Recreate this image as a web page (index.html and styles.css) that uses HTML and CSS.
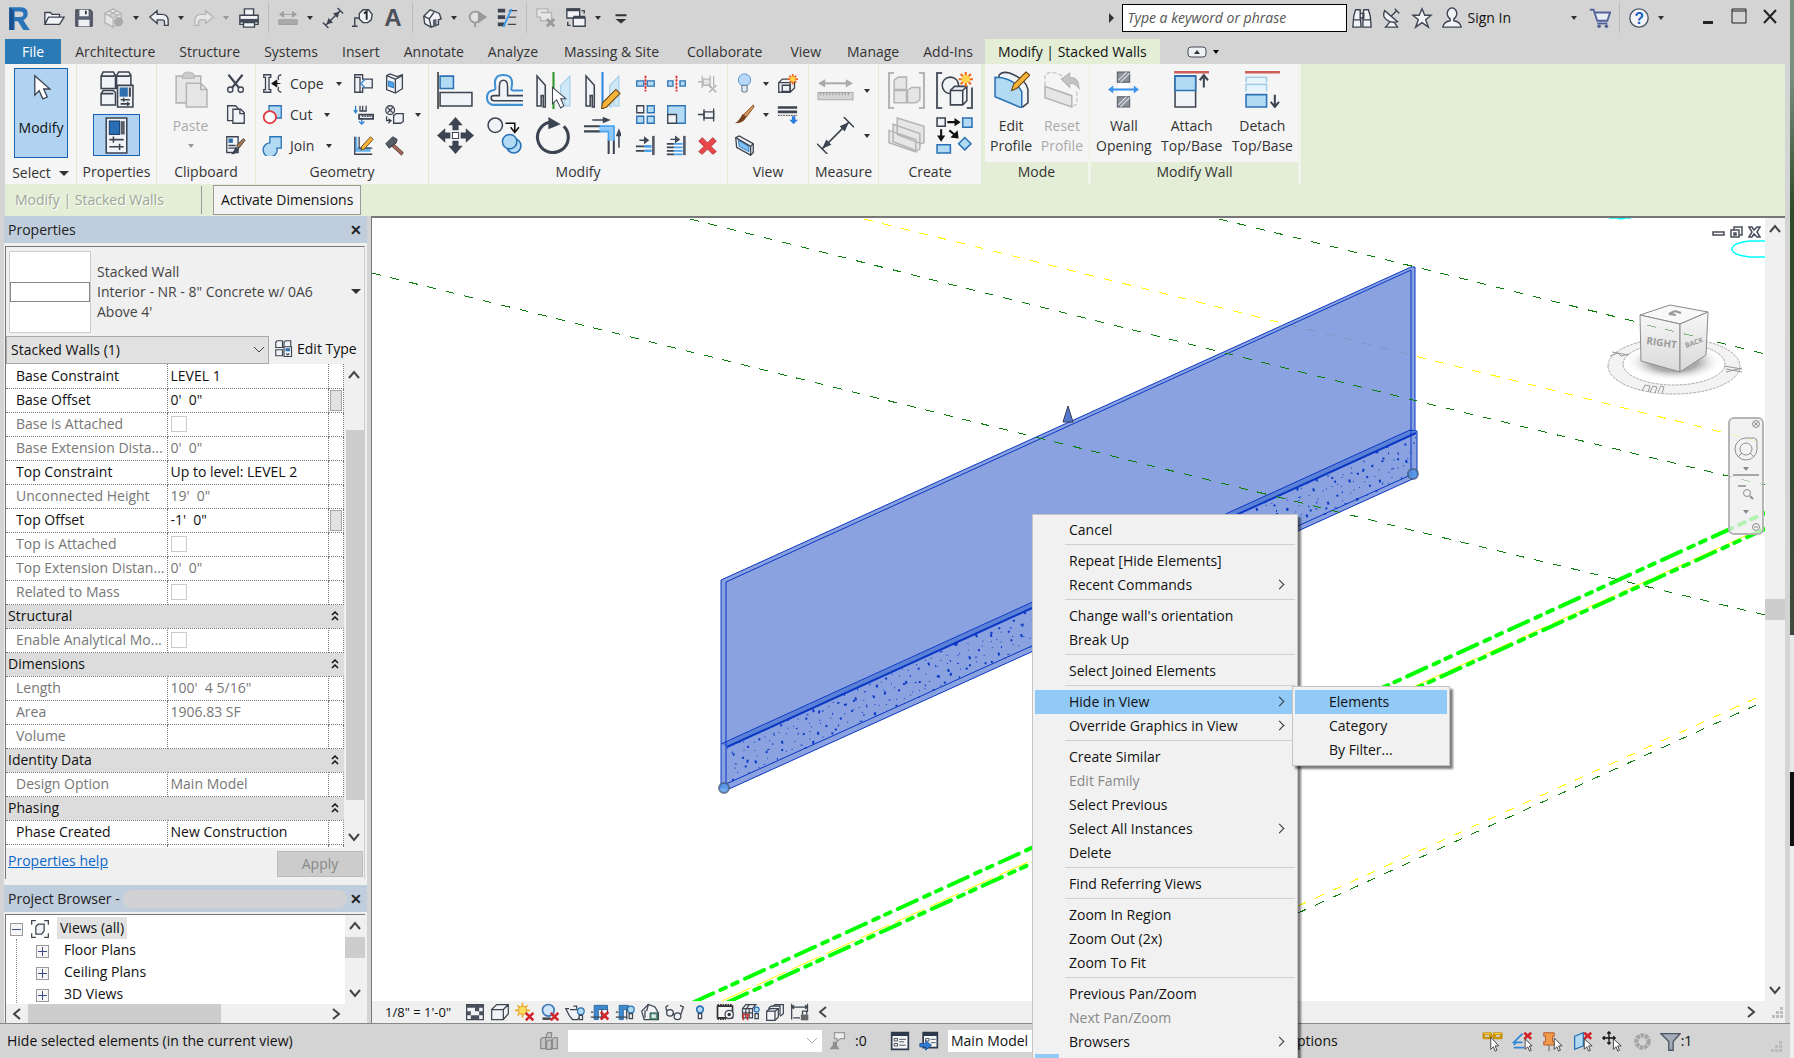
FILE: index.html
```
<!DOCTYPE html>
<html lang="en">
<head>
  <meta charset="UTF-8" />
  <meta name="viewport" content="width=device-width, initial-scale=1.0"/>
  <title>Stacked Wall - 3D View</title>
<link rel="stylesheet" href="styles.css">
</head>
<body>
<div class="app">

<!-- quick access toolbar -->
<header class="titlebar">
  <button class="qb logo" aria-label="Application menu"><svg viewBox="0 0 24 24"><path d="M3 2h11q6 0 6 6 0 4-4 6l6 9h-6l-5-8H8v8H3z" fill="#2b74b8"/><path d="M8 6h5q3 0 3 2.500T13 11H8z" fill="#d4d4d4"/><path d="M3 2l4 3v18H3z" fill="#1a4f8c"/></svg></button>
  <button class="qb" aria-label="Open"><svg viewBox="0 0 24 24"><path class="w" d="M2 19V6h6l2 2h8v3M2 19l4-8h17l-5 8z"/></svg></button>
  <button class="qb" aria-label="Save"><svg viewBox="0 0 24 24"><path d="M3 3h16l2 2v16H3z" fill="#596070" stroke="#343a45"/><path d="M7 3h10v7H7zM6 14h12v7H6z" fill="#eef0f4"/><path d="M13 4h2v4h-2z" fill="#343a45"/></svg></button>
  <button class="qb" aria-label="Synchronize"><svg viewBox="0 0 24 24"><path class="g" d="M2 7l9-5 9 5v9l-9 6-9-5zM2 7l9 5 9-5M11 12v10M6 4l9 5M16 4L7 9"/><circle cx="17" cy="16" r="5" fill="#aaa"/></svg></button><i class="caret wide"></i>
  <button class="qb" aria-label="Undo"><svg viewBox="0 0 24 24"><path class="w" d="M2 11l8-7v4h5q7 0 7 7v5h-4v-4q0-2-3-2h-5v4z"/></svg></button><i class="caret wide"></i>
  <button class="qb" aria-label="Redo"><svg viewBox="0 0 24 24"><path class="g" d="M22 11l-8-7v4H9q-7 0-7 7v5h4v-4q0-2 3-2h5v4z"/></svg></button><i class="caret wide dim"></i>
  <button class="qb" aria-label="Print"><svg viewBox="0 0 24 24"><path class="w" d="M7 9V2h10v7M2 9h20v10H2z"/><path d="M2 13h20v4H2z" fill="#444b58"/><path class="w" d="M6 17h12v5H6z"/></svg></button>
  <span class="vsep"></span>
  <button class="qb" aria-label="Measure"><svg viewBox="0 0 24 24"><path d="M3 8h18M3 8l4-3v6zM21 8l-4-3v6zM2 14h20v5H2z" fill="#aaa" stroke="#999"/></svg></button><i class="caret wide"></i>
  <button class="qb" aria-label="Aligned dimension"><svg viewBox="0 0 24 24"><path class="d" d="M4 20L20 4M1 17l6 6M17 1l6 6"/><path d="M5 19l2-7 5 5zM19 5l-2 7-5-5z" fill="#3d4451"/></svg></button>
  <button class="qb" aria-label="Tag"><svg viewBox="0 0 24 24"><path class="d" d="M3 21V12h6M0 21h6"/><path class="w" d="M12 3h6l4 5-1 6-4 3h-5l-4-4V7z"/><path d="M13 7l3-2v9" stroke="#222" stroke-width="2" fill="none"/></svg></button>
  <button class="qb letter" aria-label="Text">A</button>
  <span class="vsep"></span>
  <button class="qb" aria-label="Default 3D view"><svg viewBox="0 0 24 24"><path class="w" d="M3 10l7-7 10 4 2 6-3 1v5l-8 3-7-4z"/><path class="d" d="M3 10l6 3 5-7M9 13l2 9"/><path d="M13 14l4-1v7l-4 1z" fill="#596070"/></svg></button><i class="caret wide"></i>
  <button class="qb" aria-label="Section"><svg viewBox="0 0 24 24"><circle cx="10" cy="11" r="6" fill="#e2e2e2" stroke="#999" stroke-width="2"/><path d="M13 4l10 7-10 7z" fill="#999"/><path d="M10 17v5" stroke="#999" stroke-width="2"/></svg></button>
  <button class="qb" aria-label="Thin lines"><svg viewBox="0 0 24 24"><path d="M2 4h8M2 11h8M2 19h8" stroke="#3d4451" stroke-width="4"/><path d="M14 4h9M13 11h9M13 19h9" stroke="#3d4451" stroke-width="1.500"/><path d="M17 2L8 22" stroke="#3b9cf0" stroke-width="2"/></svg></button>
  <span class="vsep"></span>
  <button class="qb" aria-label="Close hidden windows"><svg viewBox="0 0 24 24"><path class="g" d="M2 2h12v4h4v9H6v-4H2zM6 6h12"/><path d="M13 13l8 8M21 13l-8 8" stroke="#999" stroke-width="3"/></svg></button>
  <button class="qb" aria-label="Switch windows"><svg viewBox="0 0 24 24"><path class="w" d="M2 2h14v10H2z"/><path d="M2 3h14M9 11h13" stroke="#3d4451" stroke-width="3"/><path class="w" d="M9 12h13v9H9z"/><path class="d" d="M18 4h3v3M3 16v4h3"/></svg></button><i class="caret wide"></i>
  <button class="qb" aria-label="Customize"><svg viewBox="0 0 24 24"><path d="M6 8h12v2H6zM6 13h12l-6 5z" fill="#333"/></svg></button>

  <div class="title-right">
    <i class="caret side"></i>
    <input class="search" type="text" placeholder="Type a keyword or phrase" aria-label="Search help">
    <button class="qb" aria-label="Search"><svg viewBox="0 0 24 24"><path class="w" d="M5 3h5v6l1 13H2l1-12zM14 3h5l2 7 1 12h-9V9zM10 7h4v5h-4zM3 14h8M13 14h9"/></svg></button>
    <button class="qb" aria-label="Communication center"><svg viewBox="0 0 24 24"><path class="w" d="M4 4q-3 6 2 10 5 4 12 2zM10 16l-5 6h13l-4-6"/><path class="d" d="M11 10l6-6M15 2l5 5"/></svg></button>
    <button class="qb" aria-label="Favorites"><svg viewBox="0 0 24 24"><path class="w" d="M12 2l3 7h7l-6 5 3 8-7-5-7 5 3-8-6-5h7z"/></svg></button>
    <button class="qb" aria-label="Account"><svg viewBox="0 0 24 24"><path class="w" d="M2 22q1-6 8-7v-2q-4-3-3-8 2-4 5-4t5 4q1 5-3 8v2q7 1 8 7z"/></svg></button>
    <a class="signin" href="#">Sign In</a>
    <i class="caret"></i>
    <button class="qb" aria-label="App store"><svg viewBox="0 0 24 24"><path d="M1 3h4l4 12h11l3-9H6" fill="#e8ebf3" stroke="#51629a" stroke-width="2"/><path d="M9 18h11" stroke="#51629a" stroke-width="2"/><circle cx="11" cy="21" r="2" fill="#51629a"/><circle cx="19" cy="21" r="2" fill="#51629a"/></svg></button>
    <span class="vsep"></span>
    <button class="qb" aria-label="Help"><svg viewBox="0 0 24 24"><circle cx="12" cy="12" r="10" fill="#f2f4f8" stroke="#4c5568" stroke-width="1.500"/><text x="7" y="18" font-family="Liberation Sans" font-weight="bold" font-size="17" fill="#1e5fc0">?</text></svg></button><i class="caret wide"></i>
    <div class="win">
      <button aria-label="Minimize"><svg viewBox="0 0 24 24"><path d="M7 15h10v3H7z" fill="#222"/></svg></button>
      <button aria-label="Maximize"><svg viewBox="0 0 24 24"><path d="M5 3h14v14H5zM5 5h14" fill="none" stroke="#222"/></svg></button>
      <button aria-label="Close"><svg viewBox="0 0 24 24"><path d="M6 4l12 13M18 4L6 17" stroke="#222" stroke-width="2"/></svg></button>
    </div>
  </div>
</header>

<nav class="tabs">
  <a class="file" href="#">File</a>
  <a href="#">Architecture</a>
  <a href="#">Structure</a>
  <a href="#">Systems</a>
  <a href="#">Insert</a>
  <a href="#">Annotate</a>
  <a href="#">Analyze</a>
  <a class="roomy" href="#">Massing &amp; Site</a>
  <a class="roomy" href="#">Collaborate</a>
  <a class="roomy" href="#">View</a>
  <a href="#">Manage</a>
  <a href="#">Add-Ins</a>
  <a class="current" href="#">Modify | Stacked Walls</a>
  <button class="mini" aria-label="Minimize ribbon"><svg viewBox="0 0 20 12"><rect x="1" y="1" width="18" height="10" rx="3" fill="#eef0f4" stroke="#444b58"/><path d="M7 8h6l-3-4z" fill="#333"/></svg><i class="caret"></i></button>
</nav>

<!-- ribbon -->
<section class="ribbon">
  <div class="panel p-select">
    <div class="body">
      <button class="modify-btn"><svg class="ic" viewBox="0 0 36 36"><path d="M11 3v22l5-5 4 9 5-2-4-9h7z" fill="#fff" stroke="#3d4451" stroke-width="1.500"/></svg>Modify</button>
    </div>
    <h2>Select <i class="caret big"></i></h2>
  </div>
  <div class="panel p-props">
    <div class="body stack">
      <button class="tool" aria-label="Type properties"><svg class="ic" viewBox="0 0 36 36"><path class="w" d="M5 1h10l2 3v13H3V5zM20 1h10l2 3v13H18V5zM5 19h10l2 2v12H3V22zM3 5h12l2-2M18 5h12l2-2M3 22h12"/><path class="w" d="M19 14h15v21H19z"/><path d="M21 16h8v9h-8z" fill="#2f6fae"/><path d="M30 16h2v9h-2z" fill="#3d4451"/><path class="d" d="M22 28h9M22 32h9M25 26v4M29 30v4"/></svg></button>
      <button class="tool on" aria-label="Properties"><svg class="ic" viewBox="0 0 36 36"><path class="w" d="M8 1h20v34H8z"/><path d="M11 4h10v13H11z" fill="#2a6fb5" stroke="#173e6c"/><path d="M22 4h4v13h-4z" fill="#59606d"/><path class="d" d="M11 22h14M15 19v6M11 29h14M21 26v6"/></svg></button>
    </div>
    <h2>Properties</h2>
  </div>
  <div class="panel p-clip">
    <div class="body">
      <button class="large dis"><svg class="ic" viewBox="0 0 36 36"><path class="g" d="M4 5h24v26H4z"/><path d="M10 7q0-6 6-6t6 6z" fill="#ccc" stroke="#b5b5b5"/><path class="g" d="M14 12h14l6 6v17H14zM28 12v6h6"/></svg>Paste<i class="caret dim"></i></button>
      <div class="col3">
        <button class="sm" aria-label="Cut"><svg viewBox="0 0 24 24"><path d="M4 2l12 15M20 2L8 17" stroke="#3d4451" stroke-width="2.500"/><circle cx="6" cy="19" r="3" class="w"/><circle cx="18" cy="19" r="3" class="w"/></svg></button>
        <button class="sm" aria-label="Copy"><svg viewBox="0 0 24 24"><path class="w" d="M3 2h9l3 3v14H3z"/><path class="w" d="M9 6h9l4 4v12H9z"/><path class="d" d="M17 6v5h5"/></svg></button>
        <button class="sm" aria-label="Match type"><svg viewBox="0 0 24 24"><path class="w" d="M2 2h13v18H2z"/><path d="M4 4h5v5H4z" fill="#2f6fae"/><path class="d" d="M4 12h8M4 15h7"/><path d="M21 4l2 2-7 9-3-3z" fill="#a6784f" stroke="#444"/><path d="M12 13l4 3q-2 6-9 6 3-3 5-9z" fill="#3d4451"/></svg></button>
      </div>
    </div>
    <h2>Clipboard</h2>
  </div>
  <div class="panel p-geom">
    <div class="body">
      <div class="col3">
        <button class="txt"><svg viewBox="0 0 24 24"><path class="w" d="M2 2h8v3H8v14h2v3H2v-3h2V5H2z"/><path d="M12 12h9M11 12l6-4v8z" fill="#111" stroke="#111"/><path class="d" d="M22 2q-5 1-3 6M22 22q-5-1-3-6"/></svg>Cope<i class="caret"></i></button>
        <button class="txt"><svg viewBox="0 0 24 24"><path class="b" d="M8 2h14v14H8z"/><circle cx="9" cy="15" r="7" fill="#fff" stroke="#e0383e" stroke-width="2"/></svg>Cut<i class="caret"></i></button>
        <button class="txt"><svg viewBox="0 0 24 24"><path class="b" d="M9 2h13v13h-5a8 8 0 11-8-6z"/></svg>Join<i class="caret"></i></button>
      </div>
      <div class="grid g2">
        <button class="sm" aria-label="Wall joins"><svg viewBox="0 0 24 24"><path class="w" d="M2 2h9v5h11v10H11v5H2zM2 5h6v17"/><path d="M14 7l-5 5 5 5" fill="none" stroke="#2f86d4" stroke-width="1.500"/></svg></button>
        <button class="sm" aria-label="Split face"><svg viewBox="0 0 24 24"><path class="w" d="M3 3l4-2 8 3 6-2v16l-8 5-10-4z"/><path class="d" d="M3 3l10 4v15M13 7l8-4"/><path d="M5 9l6 2v6l-6-2z" fill="#4aa3ee" stroke="#2a72b5"/></svg></button><span></span>
        <button class="sm" aria-label="Beam joins"><svg viewBox="0 0 24 24"><path d="M3 2v8M1 7l2 3 2-3M10 17v6M7 20l3 3 3-3" stroke="#2f86d4" fill="none" stroke-width="1.500"/><path class="d" d="M8 2v6h7V2M11 2v6"/><path d="M7 12h16v5H7z" fill="#f2f3f6" stroke="#3d4451" stroke-width="2"/><path class="d" d="M10 14h11" stroke-dasharray="2 1"/></svg></button>
        <button class="sm" aria-label="Paint"><svg viewBox="0 0 24 24"><circle class="w" cx="7" cy="7" r="5"/><path class="d" d="M4 4l6 6M10 4l-6 6M3 14v5h4M5 17l3 2-3 3"/><path class="w" d="M11 13l3-2h8v9l-3 2h-8z"/></svg></button><i class="caret"></i>
        <button class="sm" aria-label="Edit joins"><svg viewBox="0 0 24 24"><path d="M5 2v12h15v5H2V2z" fill="#65b2ef"/><path d="M2 2v20h20M7 2v13h15" stroke="#3d4451" fill="none" stroke-width="1.500"/><path class="pencil" d="M20 2l3 3-10 11-4 1 1-4z"/></svg></button>
        <button class="sm" aria-label="Demolish"><svg viewBox="0 0 24 24"><path d="M10 9l12 11-2 3L8 12z" fill="#a4675a" stroke="#59372f"/><path d="M2 10l8-8 5 3-1 4-8 6z" fill="#555c68" stroke="#2d323b"/></svg></button><span></span>
      </div>
    </div>
    <h2>Geometry</h2>
  </div>
  <div class="panel p-modify">
    <div class="body">
      <div class="grid g4">
        <button class="tool" aria-label="Align"><svg class="ic" viewBox="0 0 36 36"><path d="M1 0v36" stroke="#333" stroke-width="1.500"/><path class="b" d="M3 4h13v12H3z"/><path class="w" d="M3 20h31v13H3z"/></svg></button>
        <button class="tool" aria-label="Offset"><svg class="ic" viewBox="0 0 36 36"><path d="M36 18H26q-2 0-1-4 2-11-8-11t-8 11q1 4-3 4-5 1-5 7t6 7h29" fill="none" stroke="#3f8fd4" stroke-width="2"/><path class="w" d="M36 23H21V14q0-6-4-6t-4 6v9H8q-3 0-3 2 0 3 3 3h28"/></svg></button>
        <button class="tool" aria-label="Mirror - Pick axis"><svg class="ic" viewBox="0 0 36 36"><path class="w" d="M2 4l8 9v21H8V23H6v10H2z"/><path d="M34 4l-9 9v21h2V24h2v9h5z" fill="#cfe9f7" stroke="#9ccbe6"/><path d="M18 0v36" stroke="#2c9428" stroke-width="2"/><path d="M17 15v16l4-4 4 8 3-2-3-7h5z" fill="#fff" stroke="#3d4451"/></svg></button>
        <button class="tool" aria-label="Mirror - Draw axis"><svg class="ic" viewBox="0 0 36 36"><path class="w" d="M2 4l8 9v21H8V23H6v10H2z"/><path d="M34 4l-9 9v21h2V24h2v9h5z" fill="#cfe9f7" stroke="#9ccbe6"/><path d="M18 0v36" stroke="#2f86e0" stroke-width="2"/><path class="pencil" d="M31 17l4 4-13 13-5 2 1-6z"/></svg></button>
        <button class="tool" aria-label="Move"><svg class="ic" viewBox="0 0 36 36"><path d="M18 0l7 8h-4v5h-6V8h-4zM18 36l7-8h-4v-5h-6v5h-4zM0 18l8-7v4h5v6H8v4zM36 18l-8-7v4h-5v6h5v4z" fill="#3d4451"/><path d="M15 15h6v6h-6z" fill="#fff" stroke="#3d4451"/></svg></button>
        <button class="tool" aria-label="Copy"><svg class="ic" viewBox="0 0 36 36"><circle class="w" cx="9" cy="8" r="7"/><path d="M19 6h9v8M24 10l4 5 4-5" fill="none" stroke="#111" stroke-width="1.500"/><circle class="b" cx="27" cy="28" r="7"/><circle class="b" cx="23" cy="24" r="7"/></svg></button>
        <button class="tool" aria-label="Rotate"><svg class="ic" viewBox="0 0 36 36"><path d="M28 9a15 15 0 11-14-4" fill="none" stroke="#3d4451" stroke-width="3"/><path d="M13 0l12 7-12 5z" fill="#3d4451"/></svg></button>
        <button class="tool" aria-label="Trim"><svg class="ic" viewBox="0 0 36 36"><path d="M0 9h16M0 14h16M24 22v14M29 22v14" stroke="#3d4451" stroke-width="2"/><path d="M15 9h14v14M15 14h9v9" fill="none" stroke="#4aa3ee" stroke-width="2"/><path d="M15 10h13v13h-3V13H15z" fill="#8cc7f5"/><path class="d" d="M8 3h15M19 1l5 2-5 2zM34 30V14M32 18l2-5 2 5z"/></svg></button>
      </div>
      <div class="grid g3">
        <button class="sm" aria-label="Split element"><svg viewBox="0 0 24 24"><path class="b" d="M2 9h8v6H2zM14 9h8v6h-8z"/><path class="r" d="M12 3v18"/></svg></button>
        <button class="sm" aria-label="Split with gap"><svg viewBox="0 0 24 24"><path class="b" d="M2 9h6v6H2zM16 9h6v6h-6z"/><path class="r" d="M12 3v18"/></svg></button>
        <button class="sm" aria-label="Unpin"><svg viewBox="0 0 24 24"><path class="g" d="M1 10h5M7 7h8v7H7zM6 3v14M15 3v14M19 3v12"/><path d="M14 14l8 8M22 14l-8 8" stroke="#b5b5b5" stroke-width="2"/></svg></button>
        <button class="sm" aria-label="Array"><svg viewBox="0 0 24 24"><path class="w" d="M2 2h8v8H2z"/><path class="b" d="M14 2h8v8h-8zM2 14h8v8H2zM14 14h8v8h-8z"/></svg></button>
        <button class="sm" aria-label="Scale"><svg viewBox="0 0 24 24"><path class="b" d="M2 2h20v20H2z"/><path class="w" d="M2 12h10v10H2z"/></svg></button>
        <button class="sm" aria-label="Pin"><svg viewBox="0 0 24 24"><path class="w" d="M8 9h11v7H8z"/><path class="d" d="M1 12h7M8 6v13M19 5v15"/></svg></button>
        <button class="sm" aria-label="Extend single"><svg viewBox="0 0 24 24"><path d="M21 1v22" stroke="#555c68" stroke-width="3"/><path d="M1 13h10M1 18h10" stroke="#3d4451" stroke-width="2"/><path d="M11 13h8M11 18h8" stroke="#4aa3ee" stroke-width="3"/><path class="d" d="M5 6h9M11 3l4 3-4 3z"/></svg></button>
        <button class="sm" aria-label="Extend multiple"><svg viewBox="0 0 24 24"><path d="M21 1v22" stroke="#555c68" stroke-width="3"/><path d="M1 10h8M1 14h8M1 18h8M1 22h8" stroke="#3d4451" stroke-width="2"/><path d="M9 10h10M9 14h10M9 18h10M9 22h10" stroke="#4aa3ee" stroke-width="2"/><path class="d" d="M5 5h9M11 2l4 3-4 3z"/></svg></button>
        <button class="sm" aria-label="Delete"><svg viewBox="0 0 24 24"><path d="M6 3l6 6 6-6 4 4-6 6 6 6-4 3-6-6-6 6-4-3 6-6-6-6z" fill="#e8484a" stroke="#b02c30"/></svg></button>
      </div>
    </div>
    <h2>Modify</h2>
  </div>
  <div class="panel p-view">
    <div class="body">
      <div class="grid gv">
        <button class="sm" aria-label="Hide in view"><svg viewBox="0 0 24 24"><circle cx="12" cy="8" r="7" fill="#b7d8fa" stroke="#4b8ed0"/><path d="M9 14h6v7q-3 2-6 0z" fill="#dfe8f5" stroke="#51627a"/></svg></button><i class="caret"></i>
        <button class="sm" aria-label="Selection box"><svg viewBox="0 0 24 24"><path class="w" d="M2 11l4-4h14v10l-5 5H2zM6 14h9v7H6z"/><path class="d" d="M2 11h13v11M15 11l5-4"/><path class="star" d="M18 1v12M12 7h12M14 3l8 8M22 3l-8 8"/><circle cx="18" cy="7" r="3" fill="#ffd34d"/></svg></button>
        <button class="sm" aria-label="Override graphics"><svg viewBox="0 0 24 24"><path d="M22 1l1 2-9 12-3-3z" fill="#d89758" stroke="#7c4a22"/><path d="M10 11l4 4q-3 7-13 7 5-3 9-11z" fill="#78421f"/></svg></button><i class="caret"></i>
        <button class="sm" aria-label="Linework"><svg viewBox="0 0 24 24"><path d="M1 4h22M1 9h22" stroke="#3d4451" stroke-width="3"/><path d="M1 13h22" stroke="#333" stroke-dasharray="2 1"/><path d="M17 14h4v4h3l-5 5-5-5h3z" fill="#2d7ddb"/></svg></button>
        <button class="sm" aria-label="Displace"><svg viewBox="0 0 24 24"><path class="w" d="M2 3l4-2 16 9v10l-3 3L3 14z"/><path d="M5 6l12 7v6L6 13z" fill="#7cc0f5" stroke="#2a72b5"/><path class="d" d="M2 3l17 10v10M19 13l3-3"/></svg></button>
      </div>
    </div>
    <h2>View</h2>
  </div>
  <div class="panel p-measure">
    <div class="body">
      <div class="grid gm">
        <button class="tool" aria-label="Measure between references"><svg class="ic" viewBox="0 0 36 36"><path d="M5 11h26" stroke="#aaa" stroke-width="2"/><path d="M1 11l7-4v8zM35 11l-7-4v8z" fill="#aaa"/><path d="M1 20h34v7H1z" fill="#d5d5d5" stroke="#aaa"/><path d="M3 21h30" stroke="#999" stroke-dasharray="1 2" stroke-width="3"/></svg></button><i class="caret"></i>
        <button class="tool" aria-label="Aligned dimension"><svg class="ic" viewBox="0 0 36 36"><path class="d" d="M5 31L31 5M0 26l10 10M26 0l10 10"/><path d="M5 31l4-9 5 5zM31 5l-4 9-5-5z" fill="#3d4451"/></svg></button><i class="caret"></i>
      </div>
    </div>
    <h2>Measure</h2>
  </div>
  <div class="panel p-create">
    <div class="body">
      <div class="grid gc">
        <button class="tool" aria-label="Create assembly"><svg class="ic" viewBox="0 0 36 36"><path d="M6 1H1v34h5M30 1h5v34h-5" fill="none" stroke="#b5b5b5" stroke-width="2"/><path class="g" d="M6 8l4-3h8v12H6zM6 18h12v12H6zM19 18l4-3h8v12l-4 3h-8z"/></svg></button>
        <button class="tool" aria-label="Create group"><svg class="ic" viewBox="0 0 36 36"><path d="M6 1H1v34h5M30 35h5V15" fill="none" stroke="#555c68" stroke-width="2"/><circle class="w" cx="14" cy="13" r="8"/><path class="w" d="M14 18l4-4h12v14l-4 4H14z"/><path class="d" d="M14 18h12v14M26 18l4-4"/><path class="star" d="M29 0v14M22 7h14M24 2l10 10M34 2L24 12"/><circle cx="29" cy="7" r="4" fill="#ffd34d"/></svg></button>
        <button class="tool" aria-label="Create parts"><svg class="ic" viewBox="0 0 36 36"><path class="g" d="M9 1l26 8v16l-3 1-23-9zM5 7l26 9v15l-3 2-23-9zM1 13l26 9v12l-26-9z"/></svg></button>
        <button class="tool" aria-label="Create similar"><svg class="ic" viewBox="0 0 36 36"><path class="w" d="M1 1h8v8H1z"/><path class="b" d="M26 1h9v9h-9zM1 27h13v8H1zM28 20l6 6-6 6-6-6z"/><path d="M11 5h9M5 12v8M13 13l6 5" stroke="#111" stroke-width="2"/><path d="M18 1l6 4-6 4zM1 18l4 6 4-6zM21 13l1 8-8-1z" fill="#111"/></svg></button>
      </div>
    </div>
    <h2>Create</h2>
  </div>
  <div class="panel ctx p-mode">
    <div class="body">
      <button class="large"><svg class="ic" viewBox="0 0 36 36"><path class="w" d="M6 4q3-4 10-2 16 6 18 16v13l-5 4L4 24z"/><path class="b" d="M2 6q18 0 26 14v16L2 25z"/><path class="pencil" d="M32 1l4 3-13 13-5 2 2-6z"/></svg><span>Edit<br>Profile</span></button>
      <button class="large dis"><svg class="ic" viewBox="0 0 36 36"><path d="M2 14V4q4-4 10-2l8 3M33 20v12l-5 3" fill="none" stroke="#bbb" stroke-dasharray="4 2"/><path class="g" d="M2 15l26 9v11L2 26z"/><path d="M18 8l8-6v4q9 0 9 11-3-5-9-5v4z" fill="#c4c4c4" stroke="#b5b5b5"/></svg><span>Reset<br>Profile</span></button>
    </div>
    <h2>Mode</h2>
  </div>
  <div class="panel ctx p-wall">
    <div class="body">
      <button class="large"><svg class="ic" viewBox="0 0 36 36"><path d="M12 1h12v10H12zM12 25h12v10H12z" fill="#8b909a" stroke="#555c68"/><path d="M13 9l8-8M15 11l9-9M13 33l8-8M15 35l9-9" stroke="#e4e6ea"/><path d="M13 12h10v12H13z" fill="#fff"/><path d="M7 18h22" stroke="#3a93ee" stroke-width="2"/><path d="M3 18l5-4v8zM33 18l-5-4v8z" fill="#3a93ee"/></svg><span>Wall<br>Opening</span></button>
      <button class="large"><svg class="ic" viewBox="0 0 36 36"><path d="M1 1h34" stroke="#cc6058" stroke-width="3"/><path class="w" d="M2 5h20v30H2z"/><path class="b" d="M2 5h20v14H2z"/><path d="M30 16V6M26 9l4-5 4 5" fill="none" stroke="#3d4451" stroke-width="2"/></svg><span>Attach<br>Top/Base</span></button>
      <button class="large"><svg class="ic" viewBox="0 0 36 36"><path d="M1 1h34" stroke="#cc6058" stroke-width="3"/><path d="M2 20V13h20v7M2 11V6h20v5" fill="#e5f3fb" stroke="#a3cfe8" stroke-width="1.500"/><path class="b" d="M2 23h20v12H2z"/><path d="M30 23v11M26 30l4 5 4-5" fill="none" stroke="#3d4451" stroke-width="2"/></svg><span>Detach<br>Top/Base</span></button>
    </div>
    <h2>Modify Wall</h2>
  </div>
</section>

<div class="options">
  <span class="mode-name">Modify | Stacked Walls</span>
  <button class="activate">Activate Dimensions</button>
</div>

<main class="work">
  <aside class="dock">
    <div class="dock-title">Properties <button aria-label="Close properties">✕</button></div>
    <div class="props">
      <button class="type-picker">
        <span class="preview"><i></i></span>
        <span class="type-name">Stacked Wall<br>Interior - NR - 8" Concrete w/ 0A6<br>Above 4'</span>
        <i class="caret big"></i>
      </button>
      <div class="filter-row">
        <span class="select"><select aria-label="Category filter"><option>Stacked Walls (1)</option></select><svg viewBox="0 0 16 16"><path class="chev" d="M3 5l5 5 5-5"/></svg></span>
        <button class="edit-type"><svg viewBox="0 0 24 24"><path class="w" d="M1 3l2-2h7v9H1zM12 3l2-2h7v9h-9zM1 13h9v8H1z"/><path class="w" d="M12 9h10v13H12z"/><path d="M14 11h6v4h-6z" fill="#2f6fae"/><path class="d" d="M15 18l2 2 2-2"/></svg>Edit Type</button>
      </div>
      <div class="grid-wrap">
        <div class="table-clip">
        <table>
          <tbody>
            <tr><th>Base Constraint</th><td>LEVEL 1</td><td></td></tr>
            <tr><th>Base Offset</th><td>0'&nbsp; 0"</td><td><button aria-label="Associate base offset"></button></td></tr>
            <tr class="ro"><th><label for="c1">Base is Attached</label></th><td><input type="checkbox" id="c1" disabled></td><td></td></tr>
            <tr class="ro"><th>Base Extension Dista...</th><td>0'&nbsp; 0"</td><td></td></tr>
            <tr><th>Top Constraint</th><td>Up to level: LEVEL 2</td><td></td></tr>
            <tr class="ro"><th>Unconnected Height</th><td>19'&nbsp; 0"</td><td></td></tr>
            <tr><th>Top Offset</th><td>-1'&nbsp; 0"</td><td><button aria-label="Associate top offset"></button></td></tr>
            <tr class="ro"><th><label for="c2">Top is Attached</label></th><td><input type="checkbox" id="c2" disabled></td><td></td></tr>
            <tr class="ro"><th>Top Extension Distan...</th><td>0'&nbsp; 0"</td><td></td></tr>
            <tr class="ro"><th><label for="c3">Related to Mass</label></th><td><input type="checkbox" id="c3" disabled></td><td></td></tr>
            <tr class="group"><th colspan="2">Structural</th><td><svg viewBox="0 0 10 12"><path d="M2 5l3-3 3 3M2 10l3-3 3 3"/></svg></td></tr>
            <tr class="ro"><th><label for="c4">Enable Analytical Mo...</label></th><td><input type="checkbox" id="c4" disabled></td><td></td></tr>
            <tr class="group"><th colspan="2">Dimensions</th><td><svg viewBox="0 0 10 12"><path d="M2 5l3-3 3 3M2 10l3-3 3 3"/></svg></td></tr>
            <tr class="ro"><th>Length</th><td>100'&nbsp; 4 5/16"</td><td></td></tr>
            <tr class="ro"><th>Area</th><td>1906.83 SF</td><td></td></tr>
            <tr class="ro"><th>Volume</th><td></td><td></td></tr>
            <tr class="group"><th colspan="2">Identity Data</th><td><svg viewBox="0 0 10 12"><path d="M2 5l3-3 3 3M2 10l3-3 3 3"/></svg></td></tr>
            <tr class="ro"><th>Design Option</th><td>Main Model</td><td></td></tr>
            <tr class="group"><th colspan="2">Phasing</th><td><svg viewBox="0 0 10 12"><path d="M2 5l3-3 3 3M2 10l3-3 3 3"/></svg></td></tr>
            <tr><th>Phase Created</th><td>New Construction</td><td></td></tr>
            <tr><th></th><td></td><td></td></tr>
          </tbody>
        </table>
        </div>
        <div class="vscroll">
          <svg viewBox="0 0 16 16"><path class="chev" d="M3 11l5-6 5 6"/></svg>
          <span class="track"><i class="thumb props-thumb"></i></span>
          <svg viewBox="0 0 16 16"><path class="chev" d="M3 5l5 6 5-6"/></svg>
        </div>
      </div>
      <div class="props-foot"><a href="#">Properties help</a><button disabled>Apply</button></div>
    </div>

    <div class="dock-title">Project Browser -<span class="redact"></span><button aria-label="Close browser">✕</button></div>
    <div class="browser">
      <div class="browser-main">
        <ul class="tree">
          <li><i class="box minus"></i><svg viewBox="0 0 24 24"><path class="d" d="M2 7V2h5M17 2h5v5M22 17v5h-5M7 22H2v-5"/><path class="w" d="M7 9l3-3h7v8l-3 4H7z"/></svg><span class="sel">Views (all)</span>
            <ul>
              <li><i class="box plus"></i>Floor Plans</li>
              <li><i class="box plus"></i>Ceiling Plans</li>
              <li><i class="box plus"></i>3D Views</li>
            </ul>
          </li>
        </ul>
        <div class="vscroll">
          <svg viewBox="0 0 16 16"><path class="chev" d="M3 11l5-6 5 6"/></svg>
          <span class="track"><i class="thumb tree-thumb"></i></span>
          <svg viewBox="0 0 16 16"><path class="chev" d="M3 5l5 6 5-6"/></svg>
        </div>
      </div>
      <div class="hscroll">
        <svg viewBox="0 0 16 16"><path class="chev" d="M11 3L5 8l6 5"/></svg>
        <span class="track"><i class="thumb"></i></span>
        <svg viewBox="0 0 16 16"><path class="chev" d="M5 3l6 5-6 5"/></svg>
      </div>
    </div>
  </aside>

  <section class="view">
    <div class="view-main">
      <svg class="model" viewBox="372 218 1393 784" preserveAspectRatio="xMinYMin slice">
        <defs>
          <pattern id="concrete" width="97" height="43" patternUnits="userSpaceOnUse" patternTransform="rotate(-17)">
            <path d="M3 4h2v2h-2zM9 12h1v1h-1zM14 2h2v3h-2zM22 8h1v1h-1zM19 17h3v2h-3zM27 3h1v1h-1zM31 14h2v3h-2zM36 6h1v2h-1zM42 11h2v1h-2zM47 2h1v1h-1zM49 18h2v2h-2zM55 8h2v3h-2zM61 15h1v1h-1zM66 4h2v2h-2zM70 11h1v1h-1zM75 19h2v2h-2zM80 6h1v1h-1zM84 13h2v3h-2zM90 3h1v1h-1zM93 17h2v1h-2zM5 22h1v2h-1zM11 29h2v2h-2zM17 35h1v1h-1zM24 25h2v2h-2zM29 38h3v1h-3zM34 30h1v1h-1zM40 24h1v3h-1zM45 34h2v3h-2zM52 28h1v1h-1zM58 38h1v1h-1zM63 26h2v1h-2zM68 33h2v2h-2zM73 40h1v1h-1zM78 29h1v1h-1zM82 36h2v3h-2zM88 25h1v1h-1zM92 32h2v2h-2zM3 38h2v2h-2z" fill="#0a37c4"/>
          </pattern>
          <pattern id="grit" width="61" height="31" patternUnits="userSpaceOnUse" patternTransform="rotate(11)">
            <path d="M2 3h1v1h-1zM8 9h1v2h-1zM13 20h2v1h-2zM19 5h1v1h-1zM24 14h2v3h-2zM28 26h1v1h-1zM33 8h1v1h-1zM37 19h1v1h-1zM41 2h2v2h-2zM46 24h1v2h-1zM50 12h1v1h-1zM56 28h2v2h-2zM58 6h1v1h-1zM5 26h1v1h-1zM17 28h1v1h-1z" fill="#0a37c4"/>
          </pattern>
          <linearGradient id="face" x1="0" y1="0" x2="0" y2="1"><stop offset="0" stop-color="#f7f7f7"/><stop offset="1" stop-color="#d9d9d9"/></linearGradient>
          <radialGradient id="shade"><stop offset="0.500" stop-color="#888" stop-opacity="0.700"/><stop offset="1" stop-color="#fff" stop-opacity="0"/></radialGradient>
          <clipPath id="wallclip"><path d="M726 583L1411 269V430L726 744z"/></clipPath>
        </defs>
        <rect x="372" y="218" width="1393" height="784" fill="#fff"/>

        <g class="dash yel">
          <path d="M864 219L1765 443M1298 906L1765 694"/>
        </g>
        <path d="M722 1001L1765 527" stroke="#ff0" stroke-dasharray="32 6"/>
        <g class="prop-line">
          <path d="M694 1002L1765 513M728 1002L1765 529"/>
        </g>

        <!-- the selected wall -->
        <path d="M721 580L1411 267H1415V431H1417V474L1415 478 729 789 721 788z" fill="#8aa3e0"/>
        <path d="M864 219L1765 443" class="dash" stroke="#7f97c4" clip-path="url(#wallclip)"/>
        <path d="M727 747L1416 433V474L727 784z" fill="url(#concrete)"/>
        <path d="M727 747L1416 433V474L727 784z" fill="url(#grit)"/>
        <path d="M722 744L1410 430 1416 432 727 747z" fill="#5c82d8"/>
        <g fill="none" stroke="#0a37c4">
          <path d="M721 788V580L1411 267H1415V431M726 783V582L1411 270V474M1417 431V476M721 744L1410 430 1417 431M726 784L1413 474M729 789L1417 477"/>
          <path d="M727 747L1416 433" stroke-width="2"/>
        </g>
        <circle cx="724" cy="788" r="5" class="grip"/>
        <circle cx="1413" cy="474" r="5" class="grip"/>
        <path d="M1068 406l5 16h-10z" fill="#5678cf" stroke="#333b52"/>

        <g class="dash grn">
          <path d="M372 273L1407 529 1765 615M690 219L1045 308 1433 405 1765 485M1219 219L1432 271 1765 354M1298 913L1765 701"/>
        </g>
        <path d="M1609 218h8l4 1 4-1h6M1765 241h-15q-18 2-18 8t18 8h15" fill="none" stroke="#0ff" stroke-width="1.500"/>

        <!-- view cube -->
        <path d="M1608 366a66 28 0 10132 0a66 28 0 10-132 0zM1623 364a51 21 0 11102 0a51 21 0 11-102 0z" fill="#f3f3f3" stroke="#aaa" stroke-dasharray="3 1"/>
        <ellipse cx="1674" cy="362" rx="48" ry="19" fill="url(#shade)"/>
        <g fill="none" stroke="#999"><path d="M1610 356l8-3 3 3 8-2M1612 352l16 3M1724 366l18 3M1726 372l16-4M1726 369l16 3M1642 391l3-6 5 1-2 6M1650 392l3-6 4 1-2 6M1658 392l3-6 3 1-2 6"/></g>
        <g stroke="#8a8a8a" stroke-width="1">
          <path d="M1640 315l30-10 38 7-28 12z" fill="#f8f8f8"/>
          <path d="M1640 315l40 9v48l-39-11z" fill="url(#face)"/>
          <path d="M1708 312l-2 43-26 17v-48z" fill="url(#face)"/>
        </g>
        <path d="M1669 314l6-3M1669 314l7 1M1675 311l6 2" stroke="#999" stroke-width="2"/>
        <g class="cube-label">
          <text x="1646" y="344" transform="rotate(8 1646 344)">RIGHT</text>
          <text x="1686" y="348" transform="rotate(-20 1686 348)" class="back">BACK</text>
        </g>
        <g class="dash" stroke="#3f8f3f" opacity="0.600"><path d="M1647 325l50 12"/></g>

        <!-- navigation bar -->
        <rect x="1729" y="418" width="34" height="116" rx="5" fill="#eee" fill-opacity="0.750" stroke="#b5b5b5" stroke-width="2"/>
        <g fill="none" stroke="#8f8f8f">
          <circle cx="1756" cy="424" r="3.500"/><path d="M1754 422l4 4M1758 422l-4 4"/>
          <path d="M1746 438h8q3 0 3 4v7a11 11 0 11-11-11z"/><circle cx="1746" cy="449" r="6"/><path d="M1742 453l-4 4M1750 453l4 4"/>
          <path d="M1733 475h26M1738 486h8" stroke-width="1.500"/>
          <circle cx="1747" cy="493" r="3.500"/><path d="M1750 496l3 3" stroke-width="2"/>
          <circle cx="1756" cy="527" r="3.500"/><path d="M1754 527h4"/>
        </g>
        <path d="M1743 467h6l-3 4zM1743 510h6l-3 4z" fill="#888"/>

        <g fill="none" stroke="#4a4d5a" stroke-width="1.500">
          <path d="M1713 232h11v3h-11z"/>
          <path d="M1731 230h8v7h-8zM1734 230v-3h8v8h-3M1734 233h2v2h-2z"/>
          <path d="M1749 227h3l2 3 3-3h3l-3 5 3 5h-3l-3-3-2 3h-3l3-5z"/>
        </g>
      </svg>
      <div class="vscroll">
        <svg viewBox="0 0 16 16"><path class="chev" d="M3 11l5-6 5 6"/></svg>
        <span class="track"><i class="thumb view-thumb"></i></span>
        <svg viewBox="0 0 16 16"><path class="chev" d="M3 5l5 6 5-6"/></svg>
      </div>
    </div>

    <div class="viewbar">
      <button class="scale">1/8" = 1'-0"</button>
      <button class="vb" aria-label="Detail level"><svg viewBox="0 0 24 24"><path class="w" d="M2 3h20v18H2z"/><path d="M2 3h20v4H2zM2 11h5v5H2zM12 7h5v4h-5zM12 16h5v5h-5zM17 11h5v5h-5zM7 16h5v5H7z" fill="#4a505c"/></svg></button>
      <button class="vb" aria-label="Visual style"><svg viewBox="0 0 24 24"><path class="w" d="M2 9l6-6h14v11l-6 7H2zM2 9h14v12M16 9l6-6"/></svg></button>
      <button class="vb" aria-label="Sun path"><svg viewBox="0 0 24 24"><path d="M9 1v18M0 10h18M3 4l12 12M15 4L3 16" stroke="#f3ae2c" stroke-width="2"/><circle cx="9" cy="10" r="5" fill="#ffdc5e" stroke="#d9941c"/><path class="x" d="M13 13l9 9M22 13l-9 9"/></svg></button>
      <button class="vb" aria-label="Shadows"><svg viewBox="0 0 24 24"><path d="M3 20h10" stroke="#444" stroke-width="3"/><circle cx="10" cy="10" r="7" fill="#cfe4f8" stroke="#3f78b8" stroke-width="2"/><path class="x" d="M13 13l9 9M22 13l-9 9"/></svg></button>
      <button class="vb" aria-label="Rendering"><svg viewBox="0 0 24 24"><path class="w" d="M6 9h13v8l-4 4H9l-4-5-4-8h4M10 5h4v3"/><circle class="b" cx="19" cy="11" r="4"/><path class="w" d="M17 16h4v5h-4z"/></svg></button>
      <button class="vb" aria-label="Crop view"><svg viewBox="0 0 24 24"><path d="M5 4h16v5H10v12H5z" fill="#3c8ad0" stroke="#2d5f94"/><path class="d" d="M1 12h3M1 18h18M14 9v12M21 9v5"/><path class="x" d="M13 12l9 9M22 12l-9 9"/></svg></button>
      <button class="vb" aria-label="Show crop region"><svg viewBox="0 0 24 24"><path d="M5 4h11v5h-6v12H5z" fill="#3c8ad0" stroke="#2d5f94"/><path class="d" d="M1 12h3M1 18h14M14 9v12"/><circle class="b" cx="19" cy="9" r="4"/><path class="w" d="M17 14h4v6h-4z"/></svg></button>
      <button class="vb" aria-label="Lock 3D view"><svg viewBox="0 0 24 24"><path class="w" d="M2 11l8-8 8 3 4 7v8H5z"/><path class="d" d="M6 10v9M10 3l-2 8"/><path d="M12 13h9v8h-9z" fill="#5c9a84" stroke="#2e5346"/><path d="M14 15h5v4h-5z" fill="#e5f1ec"/></svg></button>
      <button class="vb" aria-label="Temporary hide/isolate"><svg viewBox="0 0 24 24"><circle class="w" cx="6" cy="13" r="4"/><circle class="w" cx="15" cy="17" r="4"/><path class="d" d="M2 11L1 6l3-2M19 15l3-9-4-2M9 14l3 2"/></svg></button>
      <button class="vb" aria-label="Reveal hidden"><svg viewBox="0 0 24 24"><circle cx="12" cy="9" r="4" fill="#b7d8fa" stroke="#2a72b5" stroke-width="2"/><path class="w" d="M10 14h4v6h-4z"/></svg></button>
      <button class="vb" aria-label="Temporary view properties"><svg viewBox="0 0 24 24"><path d="M3 5h18v14H3z" fill="#f5f5f5" stroke="#333" stroke-width="2"/><path d="M3 4h18M3 20h10" stroke="#333" stroke-width="3" stroke-dasharray="2 1"/><circle class="w" cx="17" cy="15" r="5"/><circle cx="17" cy="15" r="2" fill="#333"/></svg></button>
      <button class="vb" aria-label="Analytical model"><svg viewBox="0 0 24 24"><path class="w" d="M3 8l4-5h12l-4 5v11H3z"/><path class="d" d="M3 8h12M7 8v11M11 8v11M3 13h12M11 3L8 8"/><path d="M4 22v-8M9 22v-8M3 15h8" stroke="#c33" stroke-width="2"/><circle class="b" cx="20" cy="9" r="3"/><path class="w" d="M18 14h4v6h-4z"/></svg></button>
      <button class="vb" aria-label="Displacement sets"><svg viewBox="0 0 24 24"><path class="w" d="M8 6l4-3h10v11l-4 3M4 8l3-3h11v11M2 11l4-3h10v10l-4 4H2z"/><path class="d" d="M2 11h10v11M12 11l4-3"/></svg></button>
      <button class="vb" aria-label="Reveal constraints"><svg viewBox="0 0 24 24"><path class="d" d="M2 2v19M21 2v10M2 6h19M5 4L2 6l3 2M18 4l3 2-3 2"/><path d="M13 15h9v7h-9z" fill="#666"/><path class="d" d="M15 15v-4h5v4M4 19h8"/></svg></button>
      <svg class="vb-arrow" viewBox="0 0 16 16"><path class="chev" d="M11 3L5 8l6 5"/></svg>
      <span class="track"></span>
      <svg class="vb-arrow" viewBox="0 0 16 16"><path class="chev" d="M5 3l6 5-6 5"/></svg>
      <svg class="resize" viewBox="0 0 14 14"><path d="M10 2h3v3h-3zM6 6h3v3H6zM10 6h3v3h-3zM2 10h3v3H2zM6 10h3v3H6zM10 10h3v3h-3z" fill="#bbb"/></svg>
    </div>
  </section>
</main>

<footer class="status">
  <span class="hint">Hide selected elements (in the current view)</span>
  <svg viewBox="0 0 24 24"><path class="g dk" d="M2 10l2-2h4v13H2zM9 13l2-2h4v11H9zM16 10l2-2h4v13h-6zM9 4l2-2h4v6H9z"/></svg>
  <span class="select workset"><select aria-label="Active workset" disabled><option></option></select><svg viewBox="0 0 16 16"><path class="chev dim" d="M3 5l5 5 5-5"/></svg></span>
  <svg viewBox="0 0 24 24"><path d="M9 2h12v7h-5l-4 4V9H9z" fill="#eee" stroke="#999" stroke-width="1.500"/><path d="M7 13h5v4l3 5H3l4-5z" fill="#8f8f8f"/></svg>
  <span class="zero">:0</span>
  <svg viewBox="0 0 24 24"><path d="M2 2h20v20H2z" fill="#f5f5f5" stroke="#2d3a4c" stroke-width="2"/><path d="M2 4h20" stroke="#2d3a4c" stroke-width="4"/><path d="M5 9h4v3H5zM5 15h4v3H5zM11 10h8M11 13h6M11 17h8" stroke="#2d3a4c" fill="none"/></svg>
  <svg viewBox="0 0 24 24"><path d="M5 2h17v18H5z" fill="#f5f5f5" stroke="#2d3a4c" stroke-width="2"/><path d="M5 4h17" stroke="#2d3a4c" stroke-width="4"/><path d="M8 9h4v3H8zM14 10h6M14 14h6" stroke="#2d3a4c" fill="none"/><path d="M1 15h7v-3l7 5-7 6v-4H1z" fill="#2d7ddb" stroke="#1b4d8d"/></svg>
  <span class="select design"><select aria-label="Design option"><option>Main Model</option></select></span>
  <span>Exclude Options</span>
  <div class="filters">
    <button aria-label="Select links"><svg viewBox="0 0 24 24"><path d="M2 3h8v5H2zM14 3h8v5h-8zM8 6h8" fill="none" stroke="#c8940c" stroke-width="3" stroke-linejoin="round"/><path d="M2 3h8M14 3h8" stroke="#ffd75a"/><path class="ptr" d="M10 7v14l3-3 2 5 2-1-2-5h4z"/></svg></button>
    <button aria-label="Select underlay"><svg viewBox="0 0 24 24"><path d="M12 3L2 13h10M2 19h12M2 16l3-3" fill="none" stroke="#2f86d4" stroke-width="2"/><path class="x" d="M14 2l8 7M22 2l-8 7"/><path class="ptr" d="M15 9v12l3-3 2 5 2-1-2-5h3z"/></svg></button>
    <button aria-label="Select pinned"><svg viewBox="0 0 24 24"><path d="M2 2h12v4h-2v6h3v4H2v-4h2V6H2z" fill="#f19a4e" stroke="#b5541f"/><path d="M8 16v7" stroke="#555"/><path class="ptr" d="M14 8v13l3-3 2 5 2-1-2-5h4z"/></svg></button>
    <button aria-label="Select by face"><svg viewBox="0 0 24 24"><path class="b" d="M3 6l10-4v15L3 21z"/><path class="x" d="M14 2l8 7M22 2l-8 7"/><path class="ptr" d="M14 9v12l3-3 2 5 2-1-2-5h4z"/></svg></button>
    <button aria-label="Drag on selection"><svg viewBox="0 0 24 24"><path d="M8 1v14M1 8h14M6 3l2-2 2 2M6 13l2 2 2-2M3 6L1 8l2 2M13 6l2 2-2 2" fill="none" stroke="#111" stroke-width="1.500"/><path class="ptr" d="M13 9v12l3-3 2 5 2-1-2-5h4z"/></svg></button>
    <button aria-label="Background processes"><svg viewBox="0 0 24 24"><circle cx="12" cy="12" r="7" fill="none" stroke="#a5a5a5" stroke-width="5" stroke-dasharray="4 1"/></svg></button>
    <button class="count"><svg viewBox="0 0 24 24"><path d="M1 3h22l-8 9v10h-5V12z" fill="#a3acb8" stroke="#4b5563" stroke-width="1.500"/></svg>:1</button>
  </div>
  <svg class="resize" viewBox="0 0 14 14"><path d="M10 2h3v3h-3zM6 6h3v3H6zM10 6h3v3h-3zM2 10h3v3H2zM6 10h3v3H6zM10 10h3v3h-3z" fill="#bbb"/></svg>
</footer>
</div>

<!-- right click menu -->
<ul class="menu context">
  <li><button>Cancel</button></li>
  <li class="sep"></li>
  <li><button>Repeat [Hide Elements]</button></li>
  <li><button class="more">Recent Commands</button></li>
  <li class="sep"></li>
  <li><button>Change wall's orientation</button></li>
  <li><button>Break Up</button></li>
  <li class="sep"></li>
  <li><button>Select Joined Elements</button></li>
  <li class="sep"></li>
  <li><button class="more hot">Hide in View</button>
    <ul class="menu submenu">
      <li><button class="hot">Elements</button></li>
      <li><button>Category</button></li>
      <li><button>By Filter...</button></li>
    </ul>
  </li>
  <li><button class="more">Override Graphics in View</button></li>
  <li class="sep"></li>
  <li><button>Create Similar</button></li>
  <li><button disabled>Edit Family</button></li>
  <li><button>Select Previous</button></li>
  <li><button class="more">Select All Instances</button></li>
  <li><button>Delete</button></li>
  <li class="sep"></li>
  <li><button>Find Referring Views</button></li>
  <li class="sep"></li>
  <li><button>Zoom In Region</button></li>
  <li><button>Zoom Out (2x)</button></li>
  <li><button>Zoom To Fit</button></li>
  <li class="sep"></li>
  <li><button>Previous Pan/Zoom</button></li>
  <li><button disabled>Next Pan/Zoom</button></li>
  <li><button class="more">Browsers</button></li>
  <li class="checked"></li>
</ul>
</body>
</html>
```
FILE: styles.css
```
:root {
  --chrome: #d4d4d4;
  --green: #e4eed6;
  --panel: #f5f5f5;
  --dock: #f0f0f0;
  --head: #bfcddd;
  --ink: #3d4451;
  --hot: #91c9f7;
}

* { box-sizing: border-box; }

body {
  margin: 0;
  height: 100vh;
  overflow: hidden;
  font-family: "Open Sans", "Noto Sans", sans-serif;
  font-size: 14px;
  line-height: 20px;
  color: #111;
  background: linear-gradient(#7a8f80 0 7%, #2e4a26 20%, #3f4a3c 60%, #e8e8e8 60% 73%, #111 73% 80%, #eee 80%);
}

button, input, select { font: inherit; color: inherit; }
button { background: none; border: 0; padding: 0; }
ul { list-style: none; margin: 0; padding: 0; }
a { color: inherit; text-decoration: none; }

.app {
  height: 100vh;
  margin-right: 4px;
  padding: 0 5px 0 4px;
  display: flex;
  flex-direction: column;
  background: var(--chrome);
}

/* icon parts */
.d { fill: none; stroke: var(--ink); stroke-width: 1.5; }
.w { fill: #f2f3f6; stroke: var(--ink); stroke-width: 1.5; }
.b { fill: #b2dbf3; stroke: #2a72b5; stroke-width: 1.5; }
.g { fill: #e6e6e6; stroke: #b5b5b5; stroke-width: 1.5; }
.g.dk { fill: #c4c4c4; stroke: #8a8a8a; }
.r { fill: none; stroke: #d22; stroke-width: 2; stroke-dasharray: 3 1; }
.x { fill: none; stroke: #d3222a; stroke-width: 3; }
.pencil { fill: #f6b53a; stroke: #6b4312; }
.star { stroke: #ef6a1f; stroke-width: 2; }
.ptr { fill: #fff; stroke: #333; }
.chev { fill: none; stroke: #444; stroke-width: 2; }
.chev.dim { stroke: #aaa; stroke-width: 1; }

.caret {
  display: inline-block;
  width: 0;
  height: 0;
  border: 3px solid transparent;
  border-top: 4px solid #333;
  border-bottom: 0;
}
.caret.big { border-width: 5px 5px 0; }
.caret.dim { border-top-color: #999; }
.caret.wide { margin: 0 5px 0 4px; }
.caret.side { border: 5px solid transparent; border-left-color: #333; border-right: 0; }

/* title bar */
.titlebar {
  flex: none;
  height: 39px;
  padding-bottom: 4px;
  display: flex;
  align-items: center;
}
.qb {
  flex: none;
  width: 30px;
  height: 30px;
  display: flex;
  align-items: center;
  justify-content: center;
}
.qb svg { width: 22px; height: 22px; }
.logo { margin-right: 5px; }
.logo svg { width: 26px; height: 26px; }
.letter {
  font-family: "Liberation Sans", sans-serif;
  font-size: 24px;
  font-weight: bold;
  color: #4b505a;
}
.vsep {
  width: 1px;
  height: 30px;
  margin: 0 4px;
  background: #bbb;
}
.title-right {
  margin-left: auto;
  display: flex;
  align-items: center;
}
.search {
  width: 225px;
  height: 28px;
  margin-left: 8px;
  padding: 0 4px;
  border: 1px solid #000;
  background: #fff;
}
.search::placeholder { color: #555; font-style: italic; opacity: 1; }
.signin { margin-right: 60px; }
.title-right .caret { margin-right: 8px; }
.title-right .caret.side { margin-right: 0; }
.win { display: flex; margin-left: 20px; }
.win button { width: 31px; height: 24px; }
.win svg { width: 24px; height: 24px; }

/* tabs */
.tabs {
  flex: none;
  height: 25px;
  display: flex;
  line-height: 25px;
  color: #333;
}
.tabs a { padding: 0 12px; }
.tabs .roomy { padding: 0 14px; }
.tabs .file { padding: 0 17px; background: #2a7ab5; color: #fff; margin: 0 2px 0 1px; }
.tabs .current { padding: 0 13px; background: var(--green); color: #111; }
.mini { display: flex; align-items: center; gap: 6px; margin-left: 27px; }
.mini svg { width: 20px; height: 12px; }
.mini .caret { border-top-color: #000; }

/* ribbon */
.ribbon {
  flex: none;
  height: 120px;
  display: flex;
  background: var(--green);
  margin-left: 1px;
}
.panel {
  display: flex;
  flex-direction: column;
  background: var(--panel);
  border-right: 1px solid #e0ebd2;
}
.panel .body {
  flex: 1;
  padding: 4px 8px 0;
  display: flex;
}
.panel h2 {
  margin: 0;
  height: 22px;
  line-height: 20px;
  font-size: 14px;
  font-weight: normal;
  text-align: center;
  color: #333;
  white-space: nowrap;
}
.ctx { border-right: 3px solid #f0f4ea; }
.ctx h2 { background: var(--green); }
.p-select { width: 72px; }
.p-props { width: 80px; }
.p-clip { width: 99px; }
.p-geom { width: 173px; }
.p-modify { width: 299px; }
.p-view { width: 81px; }
.p-measure { width: 70px; }
.p-create { width: 103px; margin-right: 3px; }
.p-mode { width: 106px; }
.p-wall { width: 210px; }

.ic { width: 37px; height: 37px; display: block; }
.sm, .tool { display: flex; align-items: center; justify-content: center; }
.sm svg, .txt svg { width: 21px; height: 21px; }

.panel.p-select .body { padding-left: 9px; }
.p-select h2 { display: flex; align-items: center; justify-content: center; gap: 8px; }
.modify-btn {
  width: 54px;
  height: 90px;
  border: 1px solid #1b63b8;
  background: #b0d3f2;
  display: flex;
  flex-direction: column;
  align-items: center;
  gap: 11px;
}
.p-select .ic { width: 32px; height: 36px; margin-top: 2px; }
.stack { flex-direction: column; align-items: center; justify-content: space-between; }
.stack .tool { width: 47px; height: 42px; }
.stack .tool.on { border: 1px solid #1b63b8; background: #b0d3f2; margin-bottom: 6px; }

.large {
  display: flex;
  flex-direction: column;
  align-items: center;
  gap: 8px;
  padding-top: 3px;
  color: #333;
  text-align: center;
}
.large .ic { flex: none; }
.large.dis { color: #aaa; }
.panel.p-clip .body { padding: 4px 4px 0 15px; justify-content: space-between; }
.col3 { display: grid; grid-template-rows: repeat(3, 31px); align-content: start; }
.p-clip .col3 { width: 31px; }
.txt { display: flex; align-items: center; gap: 7px; color: #333; }
.txt .caret { margin-left: 5px; }
.grid { display: grid; align-content: start; align-items: center; }
.grid > .caret { justify-self: center; }
.g2 { grid-template: repeat(3, 31px) / 31px 31px 16px; margin-right: 2px; }
.panel.p-geom .body { padding: 4px 0 0 6px; justify-content: space-between; }
.g4 { grid-template: 45px 45px / repeat(4, 49px); }
.g3 { grid-template: repeat(3, 31px) / repeat(3, 31px); }
.panel.p-modify .body { padding: 4px 4px 0 2px; justify-content: space-between; }
.gv { grid-template: repeat(3, 31px) / 31px 12px 31px; }
.panel.p-view .body { padding: 4px 0 0 1px; }
.gm { grid-template: 45px 45px / 52px 12px; }
.panel.p-measure .body { padding: 4px 0 0; }
.gc { grid-template: 45px 45px / 50px 46px; }
.panel.p-create .body { padding: 4px 0 0 2px; }
.panel.p-mode .body, .panel.p-wall .body { padding: 4px 5px 0; justify-content: space-between; }

/* options bar */
.options {
  flex: none;
  height: 32px;
  margin-left: 1px;
  padding-left: 10px;
  display: flex;
  align-items: center;
  background: var(--green);
}
.mode-name {
  width: 187px;
  line-height: 28px;
  color: #9da596;
  text-shadow: 1px 1px #fff;
  border-right: 1px solid #999;
}
.activate {
  height: 30px;
  margin-left: 11px;
  padding: 0 7px;
  border: 1px solid #999;
  background: #f4f4f4;
}

/* docks */
.work {
  flex: 1;
  min-height: 0;
  display: flex;
  gap: 4px;
}
.dock {
  flex: none;
  width: 363px;
  display: flex;
  flex-direction: column;
  background: var(--dock);
}
.dock-title {
  flex: none;
  height: 27px;
  padding: 0 4px;
  display: flex;
  align-items: center;
  background: var(--head);
  color: #222;
}
.dock-title button { margin-left: auto; width: 14px; font-weight: bold; }
.redact {
  width: 224px;
  height: 18px;
  margin-left: 3px;
  border-radius: 9px;
  background: #d2d2d4;
}
.props {
  flex: 1;
  min-height: 0;
  margin: 3px 2px 6px 1px;
  border: 1px solid #777;
  border-width: 1px 1px 0;
  border-right-color: #ccc;
  display: flex;
  flex-direction: column;
}
.type-picker {
  flex: none;
  height: 89px;
  padding: 0 3px;
  display: flex;
  align-items: center;
  text-align: left;
  color: #444;
}
.preview {
  width: 82px;
  height: 82px;
  margin-right: 6px;
  padding-top: 30px;
  border: 1px solid #ccc;
  background: #fff;
}
.preview i { display: block; height: 20px; border: 1px solid #888; }
.type-picker .caret { margin-left: auto; }
.filter-row { flex: none; height: 28px; display: flex; align-items: flex-start; gap: 6px; }
.select { position: relative; width: 263px; display: block; }
.select select {
  appearance: none;
  width: 100%;
  height: 28px;
  padding: 0 4px;
  border: 1px solid #aaa;
  border-radius: 0;
  background: #e1e1e1;
  opacity: 1;
}
.select svg { position: absolute; right: 2px; top: 6px; width: 16px; height: 16px; pointer-events: none; }
.filter-row .chev { stroke-width: 1; }
.edit-type { display: flex; align-items: center; gap: 4px; height: 26px; white-space: nowrap; }
.edit-type svg { width: 18px; height: 18px; }

.grid-wrap { flex: 1; min-height: 0; display: flex; }
.table-clip { flex: 1; overflow: hidden; background: #fff; }
.props table {
  width: 100%;
  table-layout: fixed;
  border-collapse: collapse;
}
.props tr { height: 24px; }
.props th, .props td {
  height: 24px;
  padding: 0 0 0 3px;
  border: 1px dotted #777;
  text-align: left;
  font-weight: normal;
  line-height: 20px;
  white-space: nowrap;
  overflow: hidden;
}
.props th { width: 161px; padding-left: 10px; border-left: 0; }
.props tr > :last-child { width: 15px; padding: 0 1px; }
.props tr:first-child > * { border-top: 0; }
.ro { color: #777; }
.props .group > * { background: #dcdcdc; border: 0; padding-left: 2px; }
.group svg { display: block; width: 10px; height: 12px; fill: none; stroke: #111; stroke-width: 1.5; }
.props td button { display: block; width: 12px; height: 21px; background: #e1e1e1; border: 1px solid #aaa; }
.props input {
  appearance: none;
  display: block;
  width: 16px;
  height: 16px;
  margin: 0;
  border: 1px solid #ccc;
  background: #fff;
}
.props-foot { flex: none; height: 31px; padding: 3px 1px 0 2px; display: flex; justify-content: space-between; }
.props-foot a { color: #0a66c9; text-decoration: underline; }
.props-foot button { width: 86px; height: 26px; border: 1px solid #bbb; background: #ccc; color: #888; }

/* scroll bars */
.vscroll {
  flex: none;
  width: 20px;
  display: flex;
  flex-direction: column;
  align-items: center;
  background: var(--dock);
}
.vscroll > svg, .hscroll > svg, .vb-arrow { flex: none; width: 16px; height: 16px; margin: 3px; }
.track { position: relative; flex: 1; align-self: stretch; }
.thumb { display: block; background: #cdcdcd; }
.props-thumb { position: absolute; left: 2px; right: 0; top: 10%; bottom: 6%; }
.tree-thumb { height: 21px; }
.view-thumb { position: absolute; left: 0; right: 0; top: calc(49% - 3px); height: 21px; }
.hscroll { flex: none; height: 19px; display: flex; align-items: center; background: var(--dock); padding-right: 18px; }
.hscroll .track { height: 19px; }
.hscroll .thumb { width: 65%; height: 19px; }

.browser {
  flex: none;
  height: 109px;
  margin: 2px 2px 0 1px;
  border-top: 1px solid #777;
  border-left: 1px solid #777;
  display: flex;
  flex-direction: column;
}
.browser-main { flex: 1; min-height: 0; display: flex; background: #fff; }
.tree { flex: 1; overflow: hidden; line-height: 22px; padding: 2px 0 0 4px; }
.tree svg { width: 20px; height: 20px; margin: 0 7px; vertical-align: middle; }
.tree .sel { display: inline-block; background: #e2e2e2; padding: 0 3px; }
.tree ul { margin-left: 6px; padding-left: 19px; border-left: 1px dotted #888; }
.tree ul li { white-space: nowrap; }
.box {
  display: inline-block;
  width: 13px;
  height: 13px;
  border: 1px solid #999;
  vertical-align: middle;
  background: linear-gradient(#3a4a8a, #3a4a8a) center / 9px 1px no-repeat, #f6f6f6;
}
.box.plus {
  margin-right: 15px;
  background: linear-gradient(#3a4a8a, #3a4a8a) center / 9px 1px no-repeat, linear-gradient(#3a4a8a, #3a4a8a) center / 1px 9px no-repeat, #f6f6f6;
}

/* drawing area */
.view {
  flex: 1;
  min-width: 0;
  display: flex;
  flex-direction: column;
  border-top: 2px solid #777;
  border-left: 1px solid #777;
}
.view-main { flex: 1; min-height: 0; display: flex; background: #fff; }
.model { flex: 1; min-width: 0; height: 100%; display: block; }
.dash { fill: none; stroke-dasharray: 9 10; shape-rendering: crispEdges; }
.yel { stroke: #ff0; stroke-width: 1; }
.grn { stroke: #0a7d0a; stroke-width: 1; }
.prop-line { fill: none; stroke: #0f0; stroke-width: 4; stroke-linecap: round; stroke-dasharray: 21 8 6 7 6 8; }
.grip { fill: #4f96ea; fill-opacity: 0.8; stroke: #44577a; stroke-opacity: 0.7; stroke-width: 2; }
.cube-label { font-weight: bold; font-size: 10px; fill: #999; }
.cube-label .back { font-size: 7px; }

.viewbar {
  flex: none;
  height: 22px;
  padding: 0 1px 0 13px;
  display: flex;
  align-items: center;
  background: var(--dock);
}
.scale { width: 77px; text-align: left; font-size: 13px; white-space: nowrap; }
.vb { flex: none; width: 25px; height: 22px; display: flex; align-items: center; justify-content: center; }
.vb svg { width: 20px; height: 20px; }
.resize { flex: none; width: 14px; height: 14px; }
.viewbar .resize { margin-left: 8px; }

/* status bar */
.status {
  flex: none;
  height: 35px;
  margin: 0 -5px 0 -4px;
  padding: 0 7px;
  border-top: 1px solid #888;
  display: flex;
  align-items: center;
  white-space: nowrap;
}
.status > svg { flex: none; width: 20px; height: 20px; margin-right: 9px; }
.hint { width: 532px; }
.status .select { flex: none; }
.status .select select { height: 22px; border: 0; background: #fff; line-height: 22px; padding: 0 3px; }
.status .select svg { top: 3px; }
.status .workset { width: 254px; margin-right: 5px; }
.zero { width: 35px; margin-left: -1px; }
.design { width: 280px; margin-right: 4px; }
.filters { margin-left: auto; display: flex; }
.filters button { width: 30px; display: flex; align-items: center; justify-content: center; }
.filters svg { width: 21px; height: 21px; }
.filters .count { width: 38px; margin-right: 74px; }
.status > .resize { width: 14px; height: 14px; margin: 10px 0 0; }

/* menus */
.menu {
  position: absolute;
  padding: 3px 2px;
  border: 1px solid #c4c4c4;
  background: #f1f1f1;
  box-shadow: 3px 3px 2px rgba(0, 0, 0, 0.5);
}
.context { left: 1032px; top: 514px; width: 266px; }
.submenu { left: calc(100% - 3px); top: -4px; width: 158px; }
.menu li { position: relative; }
.menu button {
  position: relative;
  display: block;
  width: 100%;
  height: 24px;
  padding-left: 34px;
  text-align: left;
  white-space: nowrap;
}
.menu button:disabled { color: #888; }
.menu .hot { background: var(--hot); }
.menu .hot + .submenu { z-index: 1; }
.menu .more::after {
  content: "";
  position: absolute;
  right: 12px;
  top: 8px;
  width: 6px;
  height: 6px;
  border: solid #333;
  border-width: 1px 1px 0 0;
  transform: rotate(45deg);
}
.menu .sep { height: 7px; padding: 2px 0; margin-left: 30px; }
.menu .sep::after { content: ""; display: block; height: 1px; background: #d0d0d0; }
.menu .checked { width: 24px; height: 24px; background: var(--hot); }
```
